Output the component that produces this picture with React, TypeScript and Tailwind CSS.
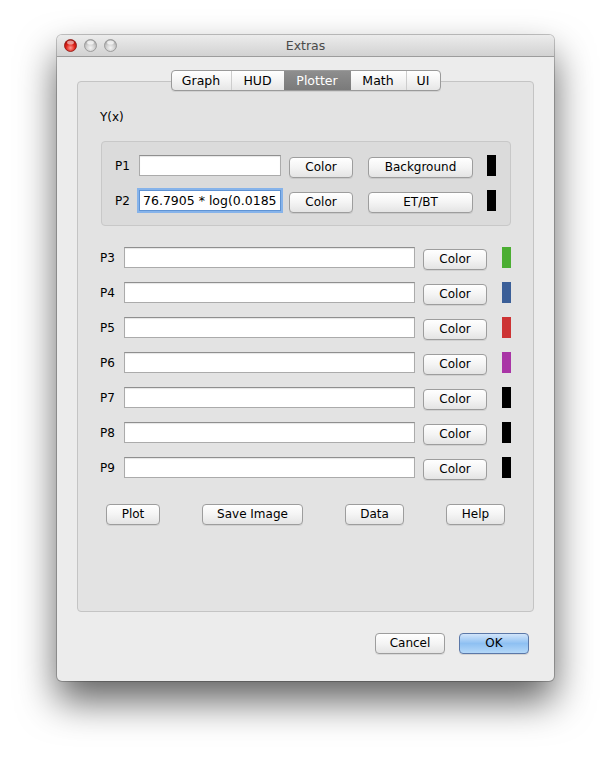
import React from 'react';

const font = { fontFamily: '"DejaVu Sans", "Liberation Sans", sans-serif' };

function Light({ kind }: { kind: 'red' | 'gray' }) {
  const id = `g-${kind}-${Math.random().toString(36).slice(2, 7)}`;
  const stops =
    kind === 'red'
      ? ['#ff9a90', '#e0241b', '#a80d08']
      : ['#f4f4f4', '#cfcfcf', '#a9a9a9'];
  return (
    <svg width="13" height="13" viewBox="0 0 13 13">
      <defs>
        <radialGradient id={id} cx="50%" cy="70%" r="65%">
          <stop offset="0%" stopColor={stops[0]} />
          <stop offset="55%" stopColor={stops[1]} />
          <stop offset="100%" stopColor={stops[2]} />
        </radialGradient>
      </defs>
      <circle cx="6.5" cy="6.5" r="6" fill={`url(#${id})`} stroke={kind === 'red' ? '#8a1410' : '#8f8f8f'} strokeWidth="0.8" />
      <ellipse cx="6.5" cy="3.6" rx="3.4" ry="2" fill="#fff" opacity={kind === 'red' ? 0.55 : 0.7} />
    </svg>
  );
}

function Button({ label, w }: { label: string; w: string }) {
  return (
    <button
      type="button"
      className={`${w} h-[21px] shrink-0 rounded-[4px] border border-[#9d9d9d] bg-linear-to-b from-white via-[#f4f4f4] to-[#e4e4e4] text-[12px] leading-[19px] text-black shadow-[0_1px_0_rgba(0,0,0,0.08)]`}
    >
      {label}
    </button>
  );
}

function Field({ w, value, focused }: { w: string; value?: string; focused?: boolean }) {
  return (
    <div
      className={`${w} h-[21px] shrink-0 overflow-hidden whitespace-nowrap bg-white pl-[3px] text-[12.5px] leading-[19px] text-black ${
        focused
          ? 'border border-[#5f93d4] shadow-[0_0_0_2px_#86b3ea]'
          : 'border border-[#ababab] border-t-[#8f8f8f] shadow-[inset_0_1px_1px_rgba(0,0,0,0.1)]'
      }`}
    >
      {value}
    </div>
  );
}

function Swatch({ color }: { color: string }) {
  return <div className={`h-[21px] w-[9px] shrink-0 ${color}`} />;
}

const tabs = [
  { name: 'Graph', w: 'w-[59px]' },
  { name: 'HUD', w: 'w-[53px]' },
  { name: 'Plotter', w: 'w-[67px]' },
  { name: 'Math', w: 'w-[55px]' },
  { name: 'UI', w: 'w-[34px]' },
];

const rows = [
  { name: 'P3', color: 'bg-[#4bae32]' },
  { name: 'P4', color: 'bg-[#3b5f98]' },
  { name: 'P5', color: 'bg-[#cd3334]' },
  { name: 'P6', color: 'bg-[#a935a6]' },
  { name: 'P7', color: 'bg-black' },
  { name: 'P8', color: 'bg-black' },
  { name: 'P9', color: 'bg-black' },
];

export default function App() {
  return (
    <div className="min-h-screen bg-white pl-[57px] pt-[35px]" style={font}>
      <div className="flex h-[646px] w-[497px] flex-col rounded-[5px] bg-[#ececec] shadow-[0_0_0_1px_rgba(0,0,0,0.22),0_20px_38px_rgba(0,0,0,0.62)]">
        {/* title bar */}
        <div className="relative flex h-[22px] items-center rounded-t-[5px] border-b border-[#9c9c9c] bg-linear-to-b from-[#ececec] to-[#d2d2d2]">
          <div className="flex gap-[7px] pl-[7px]">
            <Light kind="red" />
            <Light kind="gray" />
            <Light kind="gray" />
          </div>
          <div className="absolute inset-x-0 top-0 text-center text-[12.5px] leading-[22px] text-[#4a4a4a]">
            Extras
          </div>
        </div>

        <div className="px-[20px] pt-[13px]">
          {/* segmented control */}
          <div className="relative z-10 flex justify-center">
            <div className="flex h-[21px] overflow-hidden rounded-[4px] border border-[#9a9a9a] bg-linear-to-b from-white via-[#f4f4f4] to-[#e6e6e6] shadow-[0_1px_0_rgba(0,0,0,0.08)]">
              {tabs.map((t, i) =>
                t.name === 'Plotter' ? (
                  <div
                    key={t.name}
                    className={`${t.w} bg-linear-to-b from-[#8e8e8e] to-[#7a7a7a] text-center text-[12.5px] leading-[19px] text-white`}
                  >
                    {t.name}
                  </div>
                ) : (
                  <div
                    key={t.name}
                    className={`${t.w} text-center text-[12.5px] leading-[19px] text-black ${
                      i > 0 && tabs[i - 1].name !== 'Plotter' ? 'border-l border-[#cdcdcd]' : ''
                    }`}
                  >
                    {t.name}
                  </div>
                ),
              )}
            </div>
          </div>

          {/* tab box */}
          <div className="-mt-[10px] h-[531px] rounded-[4px] border border-[#c4c4c4] bg-[#e3e3e3] px-[22px] pt-[28px]">
            <div className="h-[15px] text-[12px] leading-[15px] text-black">Y(x)</div>

            <div className="ml-px mt-[16px] h-[85px] w-[410px] rounded-[4px] border border-[#c8c8c8] bg-[#dbdbdb] pl-[13px] pt-[13px]">
              <div className="flex h-[21px] items-center">
                <div className="w-[24px] text-[12px]">P1</div>
                <Field w="w-[142px]" />
                <div className="ml-[8px]"><Button label="Color" w="w-[64px]" /></div>
                <div className="ml-[15px]"><Button label="Background" w="w-[105px]" /></div>
                <div className="ml-[14px]"><Swatch color="bg-black" /></div>
              </div>
              <div className="mt-[14px] flex h-[21px] items-center">
                <div className="w-[24px] text-[12px]">P2</div>
                <Field w="w-[142px]" value="76.7905 * log(0.0185" focused />
                <div className="ml-[8px]"><Button label="Color" w="w-[64px]" /></div>
                <div className="ml-[15px]"><Button label="ET/BT" w="w-[105px]" /></div>
                <div className="ml-[14px]"><Swatch color="bg-black" /></div>
              </div>
            </div>

            <div className="mt-[21px] flex flex-col gap-[14px]">
              {rows.map((r) => (
                <div key={r.name} className="flex h-[21px] items-center">
                  <div className="w-[24px] text-[12px]">{r.name}</div>
                  <Field w="w-[291px]" />
                  <div className="ml-[8px]"><Button label="Color" w="w-[64px]" /></div>
                  <div className="ml-[15px]"><Swatch color={r.color} /></div>
                </div>
              ))}
            </div>

            <div className="ml-[6px] mt-[26px] flex gap-[42px]">
              <Button label="Plot" w="w-[54px]" />
              <Button label="Save Image" w="w-[101px]" />
              <Button label="Data" w="w-[59px]" />
              <Button label="Help" w="w-[59px]" />
            </div>
          </div>

          {/* dialog buttons */}
          <div className="mt-[21px] flex justify-end gap-[14px] pr-[5px]">
            <Button label="Cancel" w="w-[70px]" />
            <button
              type="button"
              className="h-[21px] w-[70px] rounded-[4px] border border-[#5b78a8] bg-linear-to-b from-[#d2e5fa] via-[#8ec0f2] to-[#b4d8f8] text-[12px] leading-[19px] text-black shadow-[0_1px_0_rgba(0,0,0,0.1)]"
            >
              OK
            </button>
          </div>
        </div>
      </div>
    </div>
  );
}
